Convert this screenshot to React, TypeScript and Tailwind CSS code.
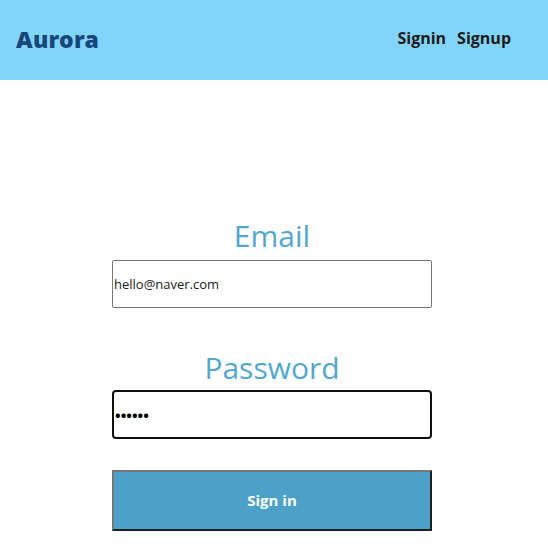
export default function App() {
  return (
    <div className="min-h-screen bg-white font-['Open_Sans',sans-serif]">
      <header className="flex h-20 items-center justify-between bg-[#81d4fa] pl-4 pr-[37px]">
        <h1 className="-mt-0.5 font-['Noto_Sans',sans-serif] text-[23px] font-black tracking-[0.2px] text-[#18457a]">
          Aurora
        </h1>
        <nav className="-mt-1 flex gap-[11px] text-[16px] font-bold text-[#1b1b1b]">
          <a>Signin</a>
          <a>Signup</a>
        </nav>
      </header>

      <form className="ml-[112px] flex w-[320px] flex-col items-center pt-[134px]">
        <label className="text-[30px] leading-[44px] text-[#52a7d0]">Email</label>
        <input
          type="email"
          defaultValue="hello@naver.com"
          className="mt-[2px] h-[48px] w-full rounded-[2px] border border-[#767676] px-[1px] text-[13px] text-[#1a1a1a] outline-none"
        />
        <label className="mt-[38px] text-[30px] leading-[44px] text-[#52a7d0]">
          Password
        </label>
        <input
          type="password"
          defaultValue="••••••"
          className="h-[49px] w-full rounded-[4px] border-2 border-[#101010] px-[1px] text-[15px] font-bold outline-none"
        />
        <button
          type="button"
          className="mt-[31px] h-[61px] w-full border-2 border-t-[#767676] border-l-[#767676] border-b-[#1e1e1e] border-r-[#1e1e1e] bg-[#4ba1c7] text-[15px] font-bold text-white"
        >
          Sign in
        </button>
      </form>
    </div>
  );
}
